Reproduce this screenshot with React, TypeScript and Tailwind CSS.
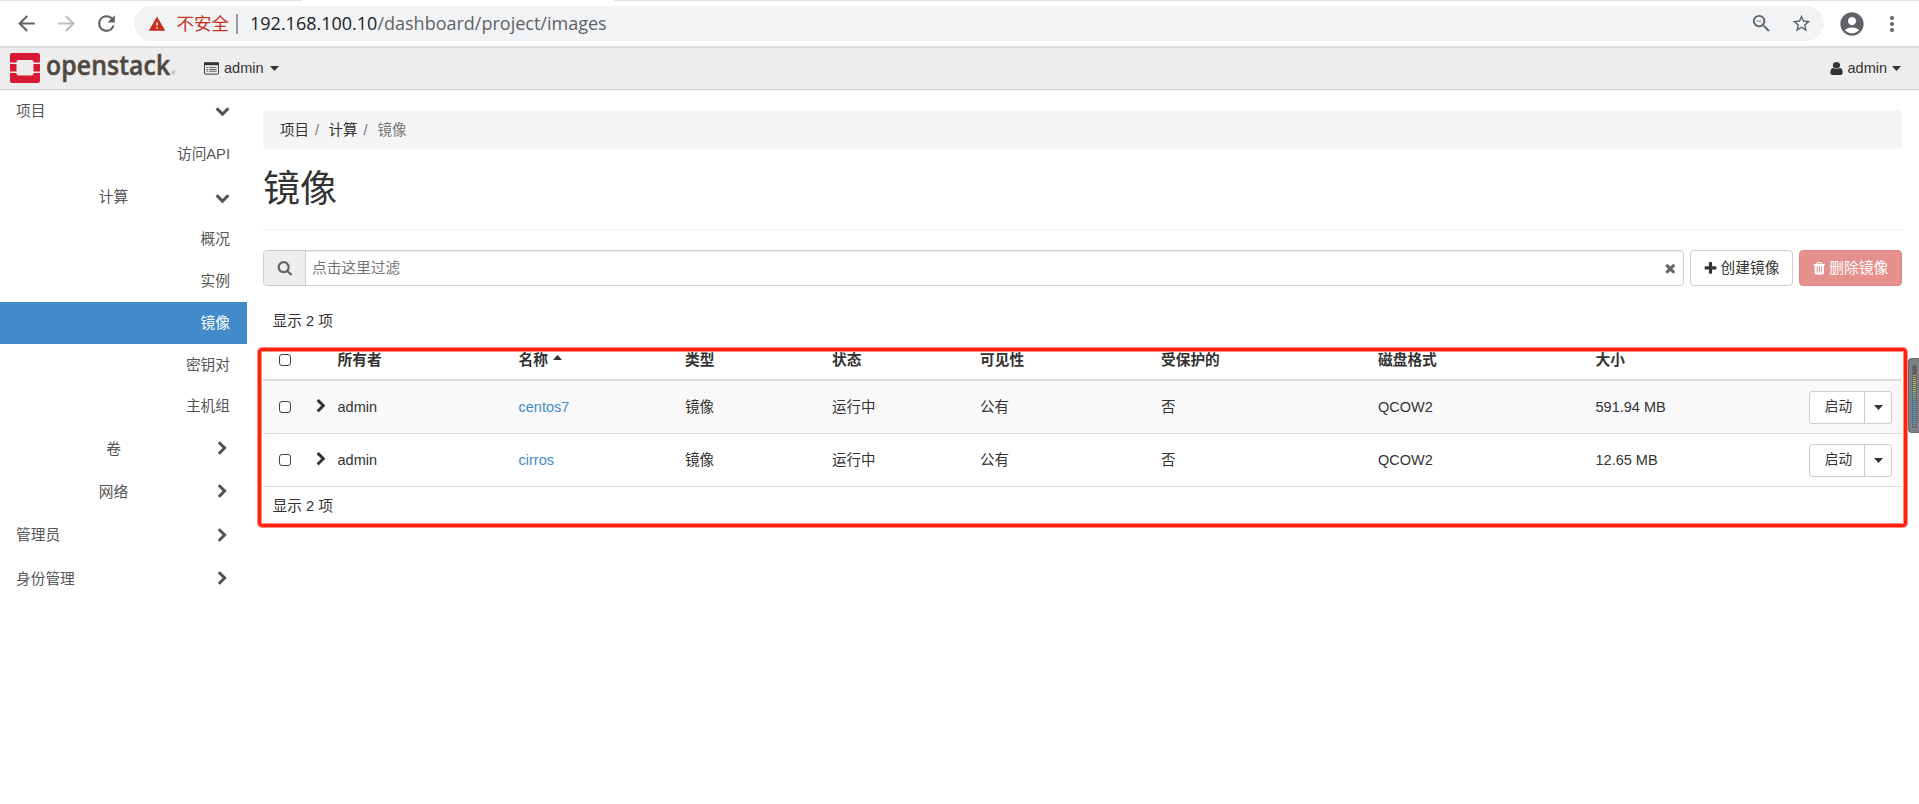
import { MdAccountCircle, MdArrowBack, MdArrowForward, MdMoreVert, MdRefresh, MdStarBorder, MdWarning, MdZoomOut } from "react-icons/md";

const icons = {
  chevronRight:
    "M1363 877l-742 742q-19 19-45 19t-45-19l-166-166q-19-19-19-45t19-45l531-531-531-531q-19-19-19-45t19-45l166-166q19-19 45-19t45 19l742 742q19 19 19 45t-19 45z",
  chevronDown:
    "M1683 808l-742 741q-19 19-45 19t-45-19l-742-741q-19-19-19-45.5t19-45.5l166-165q19-19 45-19t45 19l531 531 531-531q19-19 45-19t45 19l166 165q19 19 19 45.5t-19 45.5z",
  search:
    "M1216 832q0-185-131.5-316.5t-316.5-131.5-316.5 131.5-131.5 316.5 131.5 316.5 316.5 131.5 316.5-131.5 131.5-316.5zm512 832q0 52-38 90t-90 38q-54 0-90-38l-343-342q-179 124-399 124-143 0-273.5-55.5t-225-150-150-225-55.5-273.5 55.5-273.5 150-225 225-150 273.5-55.5 273.5 55.5 225 150 150 225 55.5 273.5q0 220-124 399l343 343q37 37 37 90z",
  times:
    "M1490 1322q0 40-28 68l-136 136q-28 28-68 28t-68-28l-294-294-294 294q-28 28-68 28t-68-28l-136-136q-28-28-28-68t28-68l294-294-294-294q-28-28-28-68t28-68l136-136q28-28 68-28t68 28l294 294 294-294q28-28 68-28t68 28l136 136q28 28 28 68t-28 68l-294 294 294 294q28 28 28 68z",
  plus:
    "M1600 736v192q0 40-28 68t-68 28h-416v416q0 40-28 68t-68 28h-192q-40 0-68-28t-28-68v-416h-416q-40 0-68-28t-28-68v-192q0-40 28-68t68-28h416v-416q0-40 28-68t68-28h192q40 0 68 28t28 68v416h416q40 0 68 28t28 68z",
  trash:
    "M704 1376v-704q0-14-9-23t-23-9h-64q-14 0-23 9t-9 23v704q0 14 9 23t23 9h64q14 0 23-9t9-23zm256 0v-704q0-14-9-23t-23-9h-64q-14 0-23 9t-9 23v704q0 14 9 23t23 9h64q14 0 23-9t9-23zm256 0v-704q0-14-9-23t-23-9h-64q-14 0-23 9t-9 23v704q0 14 9 23t23 9h64q14 0 23-9t9-23zm-544-992h448l-48-117q-7-9-17-11h-317q-10 2-17 11zm928 32v64q0 14-9 23t-23 9h-96v948q0 83-47 143.5t-113 60.5h-832q-66 0-113-58.5t-47-141.5v-952h-96q-14 0-23-9t-9-23v-64q0-14 9-23t23-9h309l70-167q15-37 54-63t79-26h320q40 0 79 26t54 63l70 167h309q14 0 23 9t9 23z",
  user:
    "M1536 1399q0 109-62.5 187t-150.5 78h-854q-88 0-150.5-78t-62.5-187q0-85 8.5-160.5t31.5-152 58.5-131 94-89 134.5-34.5q131 128 313 128t313-128q76 0 134.5 34.5t94 89 58.5 131 31.5 152 8.5 160.5zm-256-887q0 159-112.5 271.5t-271.5 112.5-271.5-112.5-112.5-271.5 112.5-271.5 271.5-112.5 271.5 112.5 112.5 271.5z",
};

function Icon({ name, className = "w-[14.5px] h-[14.5px]" }: { name: keyof typeof icons; className?: string }) {
  return (
    <svg viewBox="0 0 1792 1792" fill="currentColor" className={`shrink-0 ${className}`}>
      <path d={icons[name]} />
    </svg>
  );
}

function Caret({ up = false, className = "" }: { up?: boolean; className?: string }) {
  return (
    <svg viewBox="0 0 10 5" preserveAspectRatio="none" fill="currentColor" className={`w-[9px] h-[5px] shrink-0 ${className}`}>
      <path d={up ? "M0 5L5 0L10 5Z" : "M0 0H10L5 5Z"} />
    </svg>
  );
}

interface MenuItem {
  label: string;
  level: 1 | 2 | 3;
  height: string;
  open?: boolean;
  active?: boolean;
}

const menu: MenuItem[] = [
  { label: "项目", level: 1, height: "h-[41px]", open: true },
  { label: "访问API", level: 3, height: "h-[45px]" },
  { label: "计算", level: 2, height: "h-[42px]", open: true },
  { label: "概况", level: 3, height: "h-[42px]" },
  { label: "实例", level: 3, height: "h-[42px]" },
  { label: "镜像", level: 3, height: "h-[42px]", active: true },
  { label: "密钥对", level: 3, height: "h-[41px]" },
  { label: "主机组", level: 3, height: "h-[42px]" },
  { label: "卷", level: 2, height: "h-[43px]" },
  { label: "网络", level: 2, height: "h-[43px]" },
  { label: "管理员", level: 1, height: "h-[44px]" },
  { label: "身份管理", level: 1, height: "h-[43px]" },
];

const images = [
  { owner: "admin", name: "centos7", type: "镜像", status: "运行中", visibility: "公有", isProtected: "否", format: "QCOW2", size: "591.94 MB" },
  { owner: "admin", name: "cirros", type: "镜像", status: "运行中", visibility: "公有", isProtected: "否", format: "QCOW2", size: "12.65 MB" },
];

const columns = "grid grid-cols-[53px_21.5px_181px_166.5px_147px_148px_181px_217px_217.5px_1fr] items-center";

function Checkbox() {
  return <span className="block w-3 h-3 ml-4 rounded-[3px] border border-[#444] bg-white" />;
}

function BrowserBar() {
  return (
    <div className="h-12 flex flex-col bg-white border-b-2 border-[#dadbe0] text-[#5f6368]">
      <div className="flex h-px justify-between">
        <span className="w-[302px] bg-[#dee1e6]" />
        <span className="w-[1305px] bg-[#dee1e6]" />
      </div>
      <div className="flex-1 flex items-center">
        <MdArrowBack className="w-[25px] h-[25px] ml-3.5" />
        <MdArrowForward className="w-[25px] h-[25px] ml-[15px] text-[#bbbdbf]" />
        <MdRefresh className="w-[25px] h-[25px] ml-[14.5px]" />
        <div className="w-[1690px] h-[35px] ml-[15px] pl-3.5 pr-3 flex items-center rounded-full bg-[#f1f3f4]">
          <MdWarning className="w-[18px] h-[18px] text-[#c5301f]" />
          <span className="ml-[11px] text-[17.5px] text-[#c5301f]">不安全</span>
          <span className="w-0.5 h-5 ml-[7px] bg-[#9a9c9f]" />
          <span className="ml-3 pb-px font-['Open_Sans','Noto_Sans_CJK_SC',sans-serif] text-[18px] text-[#5f6368]">
            <span className="text-[#202124]">192.168.100.10</span>/dashboard/project/images
          </span>
          <MdZoomOut className="w-[23px] h-[23px] ml-auto" />
          <MdStarBorder className="w-[21px] h-[21px] ml-[18px]" />
        </div>
        <MdAccountCircle className="w-7 h-7 ml-3.5" />
        <MdMoreVert className="w-6 h-6 ml-3.5" />
      </div>
    </div>
  );
}

function Navbar() {
  return (
    <header className="h-[42px] pl-2.5 pr-[18px] pb-px flex items-center bg-[#ededed] border-b border-[#c9c9c9]">
      <svg viewBox="0 0 30 30" className="w-[30px] h-[30px]">
        <path fill="#da1a32" d="M2 0h26a2 2 0 0 1 2 2v7.5h-6.5V9a2 2 0 0 0-2-2h-13a2 2 0 0 0-2 2v.5H0V2a2 2 0 0 1 2-2z" />
        <path fill="#da1a32" d="M0 11h6.5v7.5H0zM23.5 11H30v7.5h-6.5z" />
        <path fill="#da1a32" d="M0 20h6.5v.5a2 2 0 0 0 2 2h13a2 2 0 0 0 2-2V20H30v8a2 2 0 0 1-2 2H2a2 2 0 0 1-2-2z" />
      </svg>
      <svg viewBox="0 0 132 40" className="w-[132px] h-10 ml-1.5 overflow-visible">
        <text y="27" transform="scale(.9 1)" textLength="138" fill="#514842" stroke="#514842" strokeWidth="0.5" className="font-['Open_Sans',sans-serif] text-[27.5px] font-semibold">openstack</text>
        <text x="125.5" y="27" fill="#777" className="text-[5px]">®</text>
      </svg>
      <svg viewBox="0 0 16 13" className="w-[15px] h-[13px] ml-[26px]">
        <rect x="0.5" y="0.5" width="15" height="12" rx="1" fill="none" stroke="#333" />
        <path fill="#333" d="M0 0h16v3H0z" />
        <path fill="#666" d="M2.5 5h2v1h-2zM5.5 5h8v1h-8zM2.5 7h2v1h-2zM5.5 7h8v1h-8zM2.5 9h2v1h-2zM5.5 9h8v1h-8z" />
      </svg>
      <span className="ml-[5px]">admin</span>
      <Caret className="ml-1.5" />
      <Icon name="user" className="w-[15px] h-[15px] ml-auto scale-x-115" />
      <span className="ml-1">admin</span>
      <Caret className="ml-[5px]" />
    </header>
  );
}

function Sidebar() {
  return (
    <nav className="w-[247px] shrink-0 text-[14.7px] text-[#555]">
      {menu.map((item) => (
        <div
          key={item.label}
          className={`${item.height} pl-4 pr-[17px] flex items-center ${item.active ? "bg-[#428bca] text-white" : ""}`}
        >
          {item.level === 2 && <span className="w-[195px] text-center">{item.label}</span>}
          {item.level === 1 && <span>{item.label}</span>}
          {item.level === 3 && <span className="ml-auto">{item.label}</span>}
          {item.level !== 3 && (
            <Icon name={item.open ? "chevronDown" : "chevronRight"} className="w-[15px] h-[15px] ml-auto mr-[0.5px]" />
          )}
        </div>
      ))}
    </nav>
  );
}

function LaunchButton() {
  return (
    <div className="w-[83px] h-[33px] ml-auto mr-[10px] flex items-stretch border border-[#ccc] rounded-[3px] bg-white text-[13.7px]">
      <button className="w-[55px] pl-[3px] border-r border-[#ccc]">启动</button>
      <button className="flex-1 flex items-center justify-center">
        <Caret />
      </button>
    </div>
  );
}

// little floating meter docked to the right edge of the screen
function EdgeMeter() {
  return (
    <div className="absolute left-[1908px] top-[358px] w-[11px] h-[75px] pt-1.5 pl-[3px] rounded-l-sm bg-[#7b8186] border border-r-0 border-[#666b70]">
      <div className="w-[5px] h-[63px] px-px py-0.5 flex flex-col gap-px bg-[#666b70]">
        {Array.from({ length: 30 }, (_, i) => (
          <span
            key={i}
            className={`h-px ${i < 4 ? "bg-[#5a5254]" : i < 8 ? "bg-[#c99a4c]" : i < 12 ? "bg-[#bdb556]" : i < 16 ? "bg-[#7fb28c]" : "bg-[#4f9fcb]"}`}
          />
        ))}
      </div>
    </div>
  );
}

export default function App() {
  return (
    <div className="relative w-[1919px] h-[804px] overflow-hidden bg-white font-['Liberation_Sans','Noto_Sans_CJK_SC',sans-serif] text-[14.5px] leading-5 text-[#333]">
      <BrowserBar />
      <Navbar />
      <div className="flex">
        <Sidebar />
        <main className="w-[1639px] ml-4 pt-5">
          <div className="h-[39px] px-[17px] flex items-center rounded bg-[#f5f5f5]">
            <span>项目</span>
            <span className="ml-1.5 text-[#777]">/</span>
            <span className="ml-[9.5px]">计算</span>
            <span className="ml-1.5 text-[#777]">/</span>
            <span className="ml-[10px] text-[#777]">镜像</span>
          </div>
          <h1 className="h-[81px] pt-[19px] text-[37px] leading-[44px] border-b border-[#eee]">镜像</h1>

          <div className="mt-5 h-9 flex">
            <div className="w-[1421px] flex border border-[#ccc] rounded overflow-hidden">
              <span className="w-[42px] flex items-center justify-center bg-[#eee] border-r border-[#ccc] text-[#666]">
                <Icon name="search" className="w-[15.5px] h-[15.5px] ml-px" />
              </span>
              <span className="flex-1 px-1.5 flex items-center text-[14.7px] text-[#757575] shadow-[inset_0_1px_1px_rgba(0,0,0,0.075)]">
                点击这里过滤
                <Icon name="times" className="w-[14.5px] h-[14.5px] ml-auto text-[#666]" />
              </span>
            </div>
            <button className="w-[103px] ml-1.5 pr-px flex items-center justify-center gap-[3px] border border-[#ccc] rounded text-[14.7px]">
              <Icon name="plus" className="w-[15px] h-[15px]" />
              创建镜像
            </button>
            <button className="w-[103px] ml-1.5 pr-px flex items-center justify-center gap-[3px] border border-[#e28481] rounded bg-[#e6908d] text-[14.7px] text-white">
              <Icon name="trash" />
              删除镜像
            </button>
          </div>

          <div className="pt-[25px] pl-[9.5px] text-[14.7px]">显示 2 项</div>
          <div className="relative mt-[10px]">
            <div className={`${columns} h-10 border-b-2 border-[#ddd] text-[14.7px] font-bold`}>
              <Checkbox />
              <span />
              <span>所有者</span>
              <span className="flex items-center">
                名称
                <Caret up className="ml-[5px] mb-1.5" />
              </span>
              <span>类型</span>
              <span>状态</span>
              <span>可见性</span>
              <span>受保护的</span>
              <span>磁盘格式</span>
              <span>大小</span>
            </div>
            {images.map((image, i) => (
              <div key={image.name} className={`${columns} h-[53px] border-b border-[#ddd] ${i % 2 === 0 ? "bg-[#f9f9f9]" : ""}`}>
                <Checkbox />
                <Icon name="chevronRight" className="w-[14.5px] h-[14.5px] -ml-0.5 mb-px" />
                <span>{image.owner}</span>
                <span className="text-[#428bca]">{image.name}</span>
                <span>{image.type}</span>
                <span>{image.status}</span>
                <span>{image.visibility}</span>
                <span>{image.isProtected}</span>
                <span>{image.format}</span>
                <span className="flex items-center">
                  {image.size}
                  <LaunchButton />
                </span>
              </div>
            ))}
            <div className="pt-[9px] pl-[9.5px] text-[14.7px]">显示 2 项</div>
            <div className="absolute -left-[5px] top-[7px] w-[1649px] h-[179px] rounded-[4px] border-[3px] border-[#ff2010] shadow-[0_0_0_1px_#ff8a80,inset_0_0_0_1px_#ff8a80] pointer-events-none" />
          </div>
        </main>
      </div>
      <EdgeMeter />
    </div>
  );
}
